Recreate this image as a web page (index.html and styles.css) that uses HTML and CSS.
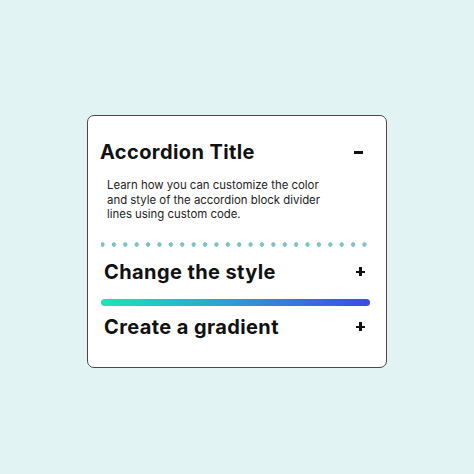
FILE: index.html
```html
<!DOCTYPE html>
<html lang="en">
<head>
  <meta charset="UTF-8" />
  <meta name="viewport" content="width=device-width, initial-scale=1.0"/>
  <title>Accordion</title>
  <link rel="stylesheet" href="styles.css">
</head>
<body>
  <div class="accordion">
    <div class="item open">
      <div class="head">
        <h2>Accordion Title</h2>
        <span class="toggle minus"></span>
      </div>
      <p class="body">Learn how you can customize the color and style of the accordion block divider lines using custom code.</p>
    </div>
    <div class="divider dots"></div>
    <div class="item">
      <div class="head">
        <h2>Change the style</h2>
        <span class="toggle plus"></span>
      </div>
    </div>
    <div class="divider gradient"></div>
    <div class="item">
      <div class="head">
        <h2>Create a gradient</h2>
        <span class="toggle plus"></span>
      </div>
    </div>
  </div>
</body>
</html>
```

FILE: styles.css
```css
body {
  margin: 0;
  height: 474px;
  background: #e2f3f3;
  font-family: Inter, 'Noto Sans', sans-serif;
  color: #111;
}
.accordion {
  box-sizing: border-box;
  width: 300px;
  height: 253px;
  margin: 115px 0 0 87px;
  padding: 23px 13px 0 13px;
  background: #fff;
  border: 1px solid #4a4a4a;
  border-radius: 7px;
}
.head {
  display: flex;
  justify-content: space-between;
  align-items: center;
  height: 26px;
  padding-left: 3px;
}
.open .head {
  padding-left: 0;
  margin-left: -1px;
}
h2 {
  margin: 0;
  font-size: 20px;
  font-weight: 700;
  letter-spacing: 0.4px;
}
.body {
  margin: 13px 0 0 6px;
  width: 232px;
  font-size: 11.4px;
  line-height: 14.5px;
  color: #222;
}
.toggle {
  position: relative;
  width: 9px;
  height: 9px;
  margin-right: 8px;
}
.toggle::before,
.toggle::after {
  content: '';
  position: absolute;
  background: #111;
}
.toggle::before {
  left: 0;
  top: 3.5px;
  width: 9px;
  height: 2.6px;
}
.minus {
  margin-right: 10px;
}
.plus::after {
  left: 3.2px;
  top: 0;
  width: 2.6px;
  height: 9px;
}
.dots {
  height: 5px;
  margin: 20px 5px 12px 0;
  background: radial-gradient(circle, #7cc3c3 2px, transparent 2.5px) -4.2px 0 / 11.4px 5px repeat-x;
}
.gradient {
  height: 7px;
  margin: 14px 3px 8px 0;
  border-radius: 4px;
  background: linear-gradient(90deg, #1ce6b4, #2e9ad6 50%, #3d4ce3);
}
```
